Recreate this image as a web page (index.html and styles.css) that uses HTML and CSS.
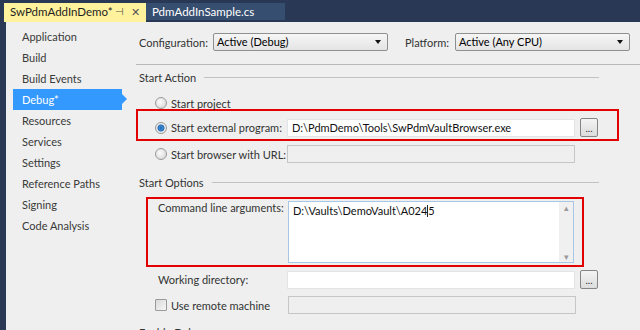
FILE: index.html
```html
<!DOCTYPE html>
<html lang="en">

<head>
  <meta charset="UTF-8">
  <title>SwPdmAddInDemo - Debug</title>
  <link rel="stylesheet" href="styles.css">
</head>

<body>
  <div class="tabs">
    <div class="tab active">
      <span class="tab-title">SwPdmAddInDemo*</span>
      <span class="tab-pin">&#8867;</span>
      <span class="tab-close">&#10005;</span>
    </div>
    <div class="tab">PdmAddInSample.cs</div>
  </div>

  <div class="workspace">
    <ul class="sidebar">
      <li>Application</li>
      <li>Build</li>
      <li>Build Events</li>
      <li class="selected">Debug*</li>
      <li>Resources</li>
      <li>Services</li>
      <li>Settings</li>
      <li>Reference Paths</li>
      <li>Signing</li>
      <li>Code Analysis</li>
    </ul>

    <div class="page">
      <div class="config-row">
        <span class="config-label">Configuration:</span>
        <div class="select">Active (Debug)<span class="arrow"></span></div>
        <span class="config-label platform">Platform:</span>
        <div class="select">Active (Any CPU)<span class="arrow"></span></div>
      </div>
      <div class="divider"></div>

      <div class="section-head">Start Action</div>

      <div class="row radio-row first">
        <span class="radio"></span>
        <span class="label">Start project</span>
      </div>

      <div class="mark mark-program">
        <div class="row radio-row">
          <span class="radio checked"></span>
          <span class="label">Start external program:</span>
          <div class="textbox">D:\PdmDemo\Tools\SwPdmVaultBrowser.exe</div>
          <button class="browse">...</button>
        </div>
      </div>

      <div class="row radio-row browser">
        <span class="radio"></span>
        <span class="label">Start browser with URL:</span>
        <div class="textbox disabled"></div>
      </div>

      <div class="section-head options">Start Options</div>

      <div class="mark mark-args">
        <div class="args">
          <span class="sub-label">Command line arguments:</span>
          <div class="textarea">
            <div class="textarea-text">D:\Vaults\DemoVault\A024<span class="caret"></span>5</div>
            <div class="scrollbar"><span>&#9652;</span><span>&#9662;</span></div>
          </div>
        </div>
      </div>

      <div class="row workdir">
        <span class="sub-label">Working directory:</span>
        <div class="textbox"></div>
        <button class="browse">...</button>
      </div>

      <div class="row radio-row remote">
        <span class="checkbox"></span>
        <span class="label">Use remote machine</span>
        <div class="textbox disabled"></div>
      </div>

      <div class="section-head debuggers">Enable Debuggers</div>
    </div>
  </div>
</body>

</html>
```

FILE: styles.css
```css
html,
body {
  margin: 0;
  padding: 0;
  height: 100%;
  overflow: hidden;
  background: #293955;
  font-family: Lato, "Liberation Sans", sans-serif;
  font-size: 11px;
  color: #1e1e1e;
  white-space: nowrap;
}

.tabs {
  display: flex;
  align-items: flex-start;
  height: 22px;
  padding-left: 4px;
}

.tab {
  box-sizing: border-box;
  height: 17px;
  line-height: 17px;
  margin-top: 3px;
  padding: 0 6px;
  width: 139px;
  background: #364e6f;
  color: #fff;
  font-size: 11.5px;
}

.tab.active {
  display: flex;
  height: 19px;
  width: 142px;
  background: #fff29d;
  color: #1e1e1e;
}

.tab-title {
  flex: 1;
}

.tab-pin {
  font-size: 10px;
  color: #555;
  margin-right: 7px;
}

.tab-close {
  font-size: 11px;
  color: #555;
}

.workspace {
  display: flex;
  height: 308px;
  margin-left: 6px;
  background: #eeefee;
}

.sidebar {
  list-style: none;
  margin: 0;
  padding: 4px 0 0 7px;
  width: 123px;
  flex: none;
}

.sidebar li {
  height: 21px;
  line-height: 21px;
  padding-left: 9px;
  width: 100px;
  color: #3a3a3a;
}

.sidebar li.selected {
  position: relative;
  background: #3399ff;
  color: #fff;
}

.sidebar li.selected::after {
  content: '';
  position: absolute;
  right: -5px;
  top: 5px;
  border-left: 5px solid #3399ff;
  border-top: 5px solid transparent;
  border-bottom: 5px solid transparent;
}

.page {
  flex: 1;
  padding-left: 3px;
}

.row {
  display: flex;
  align-items: center;
}

.config-row {
  display: flex;
  align-items: center;
  height: 18px;
  margin-top: 11px;
}

.config-label {
  width: 74px;
  color: #333;
}

.config-label.platform {
  width: 50px;
  margin-left: 17px;
}

.select {
  position: relative;
  box-sizing: border-box;
  width: 175px;
  height: 18px;
  line-height: 16px;
  padding-left: 3px;
  border: 1px solid #8e8f8f;
  border-radius: 2px;
  background: linear-gradient(#f6f6f6, #e4e4e4);
  color: #000;
}

.select .arrow {
  position: absolute;
  right: 6px;
  top: 6px;
  border-top: 4px solid #111;
  border-left: 3px solid transparent;
  border-right: 3px solid transparent;
}

.divider {
  height: 1px;
  margin: 13px 0 0 -3px;
  background: #b9b9b9;
}

.section-head {
  display: flex;
  align-items: center;
  height: 16px;
  margin-top: 4px;
  margin-right: 41px;
  color: #333;
}

.section-head::after {
  content: '';
  flex: 1;
  height: 1px;
  margin-left: 8px;
  background: #c2c2c2;
}

.section-head.options {
  margin-top: 11px;
}

.section-head.debuggers {
  margin-top: 10px;
}

.radio-row {
  padding-left: 16px;
}

.radio-row.first {
  height: 12px;
  margin-top: 12px;
}

.radio,
.checkbox {
  box-sizing: border-box;
  width: 12px;
  height: 12px;
  margin-right: 4px;
  border: 1px solid #9a9a9a;
  border-radius: 50%;
  background: radial-gradient(circle at 40% 40%, #fbfbfb, #d2d2d2);
  flex: none;
}

.radio.checked {
  background: radial-gradient(circle, #1b5fa8 0, #3f8fd6 2px, #2466ad 3px, #f3f3f3 4px, #d5d5d5 6px);
}

.checkbox {
  border-radius: 1px;
  background: linear-gradient(135deg, #d9d9d9, #f6f6f6);
}

.radio-row .label {
  width: 116px;
  color: #333;
}

.textbox {
  box-sizing: border-box;
  width: 288px;
  height: 18px;
  line-height: 16px;
  padding-left: 4px;
  border: 1px solid #e2e5e8;
  background: #fff;
  color: #111;
}

.textbox.disabled {
  border-color: #c6c6c6;
  background: #eeefee;
}

.browse {
  box-sizing: border-box;
  width: 18px;
  height: 19px;
  margin-left: 5px;
  padding: 0 0 3px;
  border: 1px solid #858585;
  border-radius: 2px;
  background: linear-gradient(#f4f4f4, #dcdcdc);
  font-family: inherit;
  font-size: 10px;
  line-height: 10px;
  color: #333;
  display: flex;
  align-items: flex-end;
  justify-content: center;
}

.mark {
  border: 2px solid #e20000;
}

.mark-program {
  margin: 0 0 0 -3px;
  padding: 7px 0 2px 17px;
  box-sizing: border-box;
  width: 483px;
}

.mark-program .radio-row {
  padding-left: 0;
}

.radio-row.browser {
  margin-top: 4px;
}

.mark-args {
  margin: 7px 0 0 7px;
  box-sizing: border-box;
  width: 438px;
  height: 70px;
  padding: 2px 8px 0 10px;
}

.args {
  display: flex;
  align-items: flex-start;
}

.sub-label {
  width: 129px;
  flex: none;
  color: #333;
}

.mark-args .sub-label {
  width: 130px;
  line-height: 14px;
}

.textarea {
  display: flex;
  box-sizing: border-box;
  width: 286px;
  height: 62px;
  border: 1px solid #a8c7e6;
  background: #fff;
}

.textarea-text {
  flex: 1;
  padding: 2px 0 0 4px;
  color: #111;
}

.caret {
  display: inline-block;
  width: 1px;
  height: 12px;
  margin-bottom: -2px;
  background: #222;
}

.scrollbar {
  display: flex;
  flex-direction: column;
  justify-content: space-between;
  width: 14px;
  background: #f0f0f0;
  color: #9a9a9a;
  font-size: 9px;
  text-align: center;
}

.workdir {
  margin-top: 3px;
  padding-left: 19px;
}

.radio-row.remote {
  margin-top: 7px;
}

.radio-row.remote .label {
  width: 117px;
}
```
